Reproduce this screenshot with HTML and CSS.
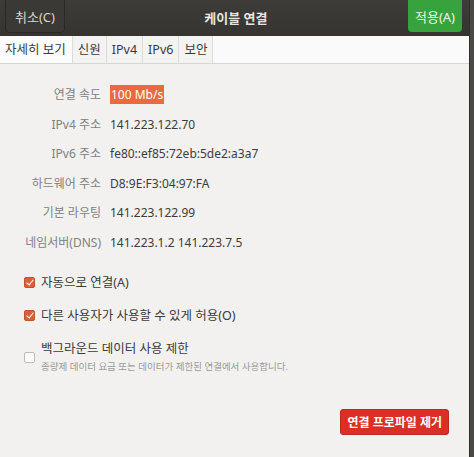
FILE: index.html
```html
<!DOCTYPE html>
<html lang="ko">
<head>
  <meta charset="utf-8">
  <title>케이블 연결</title>
  <link rel="stylesheet" href="styles.css">
</head>
<body>
  <div class="ventana">
    <div class="barra">
      <button class="btn-cancelar">취소(C)</button>
      <div class="titulo">케이블 연결</div>
      <button class="btn-aplicar">적용(A)</button>
    </div>

    <div class="pestanas">
      <div class="pestana activa">자세히 보기</div>
      <div class="pestana">신원</div>
      <div class="pestana">IPv4</div>
      <div class="pestana">IPv6</div>
      <div class="pestana">보안</div>
    </div>

    <div class="contenido">
      <div class="datos">
        <div class="etiqueta">연결 속도</div>
        <div class="valor"><span class="resaltado">100 Mb/s</span></div>
        <div class="etiqueta">IPv4 주소</div>
        <div class="valor">141.223.122.70</div>
        <div class="etiqueta">IPv6 주소</div>
        <div class="valor">fe80::ef85:72eb:5de2:a3a7</div>
        <div class="etiqueta">하드웨어 주소</div>
        <div class="valor">D8:9E:F3:04:97:FA</div>
        <div class="etiqueta">기본 라우팅</div>
        <div class="valor">141.223.122.99</div>
        <div class="etiqueta">네임서버(DNS)</div>
        <div class="valor">141.223.1.2 141.223.7.5</div>
      </div>

      <div class="opciones">
        <label class="opcion"><span class="caja marcada"></span>자동으로 연결(A)</label>
        <label class="opcion"><span class="caja marcada"></span>다른 사용자가 사용할 수 있게 허용(O)</label>
        <label class="opcion doble">
          <span class="caja"></span>
          <span>
            <span class="texto">백그라운드 데이터 사용 제한</span>
            <span class="nota">종량제 데이터 요금 또는 데이터가 제한된 연결에서 사용합니다.</span>
          </span>
        </label>
      </div>

      <div class="pie">
        <button class="btn-eliminar">연결 프로파일 제거</button>
      </div>
    </div>
  </div>
</body>
</html>
```

FILE: styles.css
```css
body {
  margin: 0;
  padding: 0;
  background-color: #4a4946;
  font-family: "Noto Sans", "Noto Sans CJK KR", sans-serif;
}

.ventana {
  width: 470px;
  height: 457px;
  background-color: #f2f1f0;
  border-right: 1px solid #2f2f2d;
  box-sizing: border-box;
  display: flex;
  flex-direction: column;
}

/* barra de titulo */
.barra {
  height: 36px;
  background: linear-gradient(#3d3c38, #353430);
  display: flex;
  align-items: flex-start;
  padding: 0 6px;
  box-sizing: border-box;
}

.barra button {
  font-family: inherit;
  font-size: 13px;
  border: none;
  height: 32px;
  padding: 0 9px;
  border-radius: 0 0 4px 4px;
}

.btn-cancelar {
  background-color: #3a3935;
  color: #d8d6d0;
  box-shadow: 0 0 0 1px #2a2927;
}

.barra .btn-aplicar {
  background-color: #38a33c;
  color: #eaf6e8;
  padding: 0 7px;
  margin-right: 1px;
}

.titulo {
  flex: 1;
  text-align: center;
  color: #e8e6e1;
  font-size: 13px;
  font-weight: bold;
  line-height: 36px;
}

/* pestanas */
.pestanas {
  height: 28px;
  display: flex;
  background-color: #fafafa;
  border-bottom: 1px solid #d8d6d2;
  box-sizing: border-box;
}

.pestana {
  padding: 0 5px;
  font-size: 12.5px;
  color: #3a3a3a;
  line-height: 27px;
  border-right: 1px solid #dddcd8;
  background-color: #f3f3f2;
}

.pestana.activa {
  background-color: #fcfcfc;
  padding: 0 6px 0 5px;
}

/* contenido */
.contenido {
  flex: 1;
  display: flex;
  flex-direction: column;
  padding: 22px 0 0;
}

.datos {
  display: grid;
  grid-template-columns: 101px 1fr;
  column-gap: 9px;
  row-gap: 11.5px;
  font-size: 12px;
  line-height: 18px;
}

.etiqueta {
  text-align: right;
  color: #808080;
}

.valor {
  color: #3c3c3c;
}

.resaltado {
  background-color: #ea6a3b;
  color: #fff;
  padding: 1px 1px;
}

.opciones {
  margin-top: 22px;
  padding-left: 24px;
  display: flex;
  flex-direction: column;
  gap: 15px;
}

.opcion {
  display: flex;
  align-items: center;
  font-size: 12.5px;
  color: #3a3a3a;
  line-height: 18px;
}

.caja {
  width: 9px;
  height: 9px;
  border: 1px solid #bdbcb8;
  border-radius: 2px;
  background-color: #fafafa;
  margin-right: 6px;
  flex-shrink: 0;
  position: relative;
}

.caja.marcada {
  background-color: #d9603a;
  border-color: #c3522e;
}

.caja.marcada::after {
  content: "";
  position: absolute;
  left: 2.5px;
  top: 0;
  width: 3px;
  height: 6px;
  border: solid #fff;
  border-width: 0 1.5px 1.5px 0;
  transform: rotate(40deg);
}

.opcion.doble .caja {
  margin-top: 2px;
}

.texto {
  display: block;
}

.nota {
  display: block;
  font-size: 9.5px;
  color: #9a9a9a;
  line-height: 14px;
  margin-top: 2px;
}

.pie {
  flex: 1;
  display: flex;
  justify-content: flex-end;
  align-items: flex-end;
  padding: 0 20px 22px 0;
}

.btn-eliminar {
  font-family: inherit;
  font-size: 12px;
  font-weight: bold;
  color: #fff;
  background-color: #db2f26;
  border: 1px solid #b82a22;
  border-radius: 3px;
  height: 26px;
  padding: 0 6px;
}
```
